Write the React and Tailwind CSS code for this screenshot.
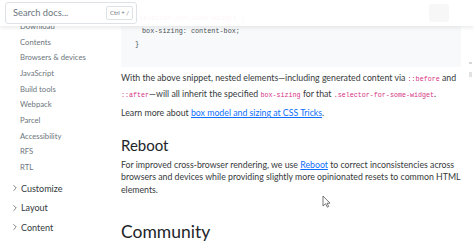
import React from 'react';
import { ChevronRight } from 'lucide-react';

const sideLinks = ['Download', 'Contents', 'Browsers & devices', 'JavaScript', 'Build tools', 'Webpack', 'Parcel', 'Accessibility', 'RFS', 'RTL'];
const groups = ['Customize', 'Layout', 'Content'];

const Code = ({ children }) => (
  <code className="font-['Liberation_Mono',monospace] text-[6.7px] text-[#d63384]">{children}</code>
);

const App = () => {
  return (
    <div className="relative w-[474px] h-[242px] overflow-hidden bg-white font-['Lato',sans-serif] text-[#212529]">
      {/* page content, scrolled */}
      <div className="flex">
        <aside className="w-[121px] shrink-0 pt-[19px]">
          <ul className="pl-[20px] text-[7.7px] text-[#6c757d]">
            {sideLinks.map((item) => (
              <li key={item} className="h-[15.67px] leading-[15.67px]">{item}</li>
            ))}
          </ul>
          <ul className="mt-[3px] pl-[10px] text-[9px] text-[#343a40]">
            {groups.map((g) => (
              <li key={g} className="flex items-center h-[19.5px] gap-[1px]">
                <ChevronRight className="w-[10px] h-[10px]" strokeWidth={1.5} />
                <span>{g}</span>
              </li>
            ))}
          </ul>
        </aside>

        <main className="w-[340px] shrink-0">
          <div className="bg-[#f8f9fa] pl-[14px] pt-[12px] pb-[16px] font-['Liberation_Mono',monospace] text-[6.8px] leading-[13px] text-[#495057]">
            <div className="text-[#d63384]">.selector-for-some-widget {'{'}</div>
            <div className="pl-[7px]">box-sizing: content-box;</div>
            <div>{'}'}</div>
          </div>

          <p className="mt-[4px] text-[8.75px] leading-[14.5px] text-[#373a3c] whitespace-nowrap">
            <span className="block">With the above snippet, nested elements—including generated content via <Code>::before</Code> and</span>
            <span className="block"><Code>::after</Code>—will all inherit the specified <Code>box-sizing</Code> for that <Code>.selector-for-some-widget</Code>.</span>
          </p>
          <p className="mt-[4px] text-[8.75px] leading-[14.5px] text-[#373a3c]">
            Learn more about <a className="text-[#0d6efd] underline">box model and sizing at CSS Tricks</a>.
          </p>

          <h2 className="mt-[13px] text-[15px] leading-[22px] font-normal">Reboot</h2>
          <p className="mt-[3px] text-[8.75px] leading-[12.8px] text-[#373a3c] whitespace-nowrap">
            <span className="block">For improved cross-browser rendering, we use <a className="text-[#0d6efd] underline">Reboot</a> to correct inconsistencies across</span>
            <span className="block">browsers and devices while providing slightly more opinionated resets to common HTML</span>
            <span className="block">elements.</span>
          </p>

          <h2 className="mt-[22px] text-[17.5px] leading-[26px] font-normal">Community</h2>
        </main>

        <div className="flex-1 flex flex-col items-end pt-[62px] pr-[2px] gap-[8px]">
          <span className="block w-[3px] h-[2px] bg-[#d6d6d6]" />
          <span className="block w-[3px] h-[5px] bg-[#e2e2e2]" />
        </div>
      </div>

      {/* sticky search bar over the content */}
      <div className="absolute left-0 top-0 right-0 h-[26px] bg-white/95 shadow-[0_2px_4px_rgba(0,0,0,0.08)] flex items-center">
        <div className="ml-[5px] w-[132px] h-[22px] rounded-[3px] border border-[#dee2e6] flex items-center justify-between pl-[7px] pr-[3px]">
          <span className="text-[9.3px] text-[#6c757d]">Search docs...</span>
          <span className="h-[14px] px-[3px] rounded-[2px] border border-[#dee2e6] text-[6px] leading-[12px] text-[#6c757d]">Ctrl + /</span>
        </div>
        <div className="ml-auto mr-[25px] w-[20px] h-[18px] rounded-[3px] bg-[#f7f7f7]" />
      </div>

      {/* mouse pointer */}
      <svg className="absolute left-[322px] top-[195px]" width="9" height="13" viewBox="0 0 9 13">
        <path d="M1 1 L1 11 L3.5 8.7 L5.3 12.2 L6.7 11.5 L5 8.2 L8 8.2 Z" fill="white" stroke="#555" strokeWidth="0.8" strokeLinejoin="round" />
      </svg>
    </div>
  );
};

export default App;
